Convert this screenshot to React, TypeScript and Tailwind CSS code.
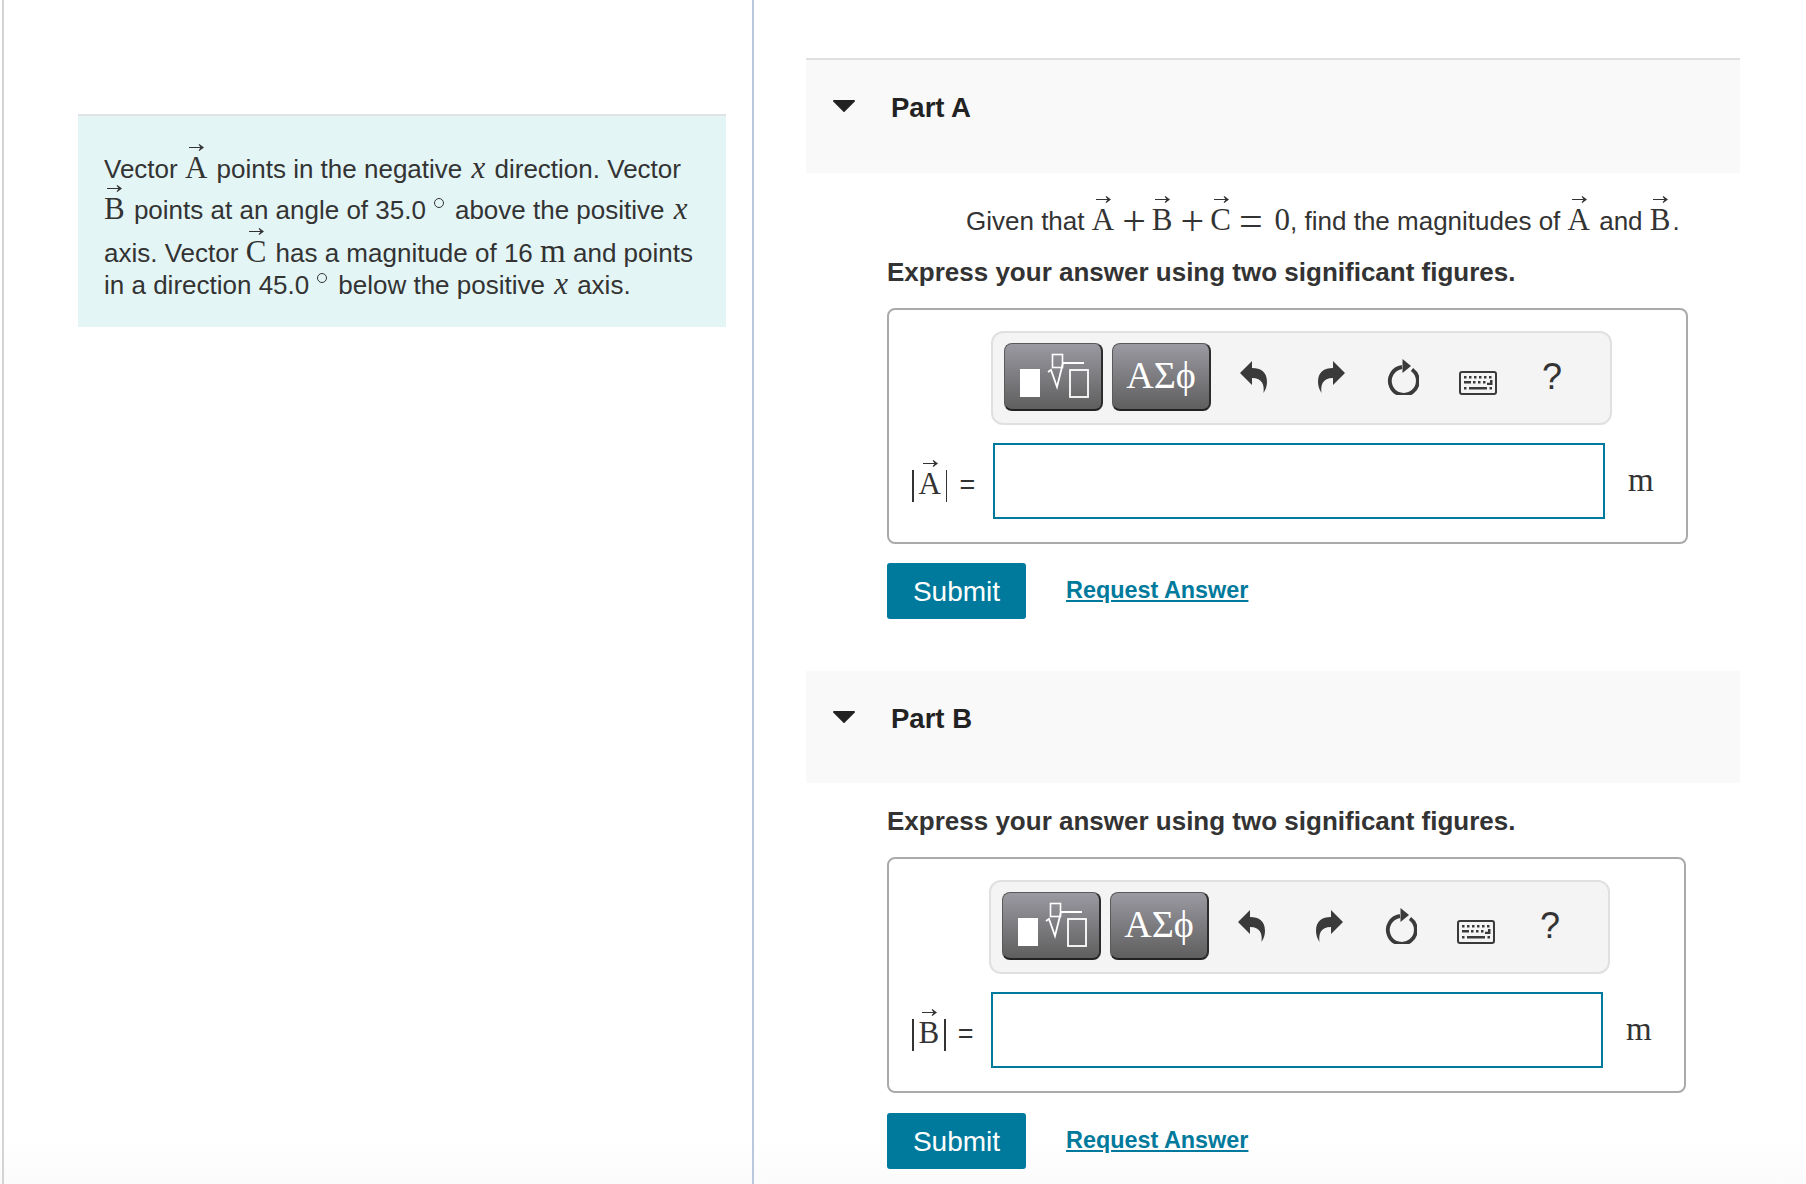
import type { ReactNode } from 'react';

const serif = 'font-["Liberation_Serif",serif]';

function Vec({ c }: { c: string }) {
  return (
    <span className={`relative inline-block mr-[2px] ${serif} text-[31px] leading-[24px]`}>
      {c}
      <svg
        className="absolute left-1/2 -top-[12px] -ml-[7px] w-[15px] h-[7px] text-[#333]"
        viewBox="0 0 15 7"
        fill="currentColor"
      >
        <path d="M0 2.900h11.400L9.600.7l.7-.6L15 3.500l-4.700 3.400-.7-.6 1.800-2.200H0z" />
      </svg>
    </span>
  );
}

function X() {
  return <span className={`${serif} italic text-[31px] leading-[20px] mx-[2px]`}>x</span>;
}

function Deg() {
  return <span className="relative -top-[11px] inline-block w-[10px] h-[10px] rounded-full border border-[#333] ml-[8px] mr-[11px]" />;
}

function Op({ c, end }: { c: string; end?: boolean }) {
  return <span className={`relative top-[5px] ${serif} text-[42px] leading-[20px] ml-[6px] ${end ? 'mr-[12px]' : 'mr-[6px]'}`}>{c}</span>;
}

function PartHeader({ label, border, height }: { label: string; border?: boolean; height: string }) {
  return (
    <div className={`bg-[#f9f9f9] ${height} ${border ? 'border-t-2 border-[#e0e0e0]' : ''} flex items-start pl-[27px]`}>
      <svg className="w-[22px] h-[12px] mt-[40px]" viewBox="0 0 22 12" fill="#222">
        <path d="M1 0h20a1 1 0 0 1 .8 1.600L11.800 11.600a1 1 0 0 1-1.600 0L.2 1.600A1 1 0 0 1 1 0z" />
      </svg>
      <span className="ml-[36px] mt-[32px] text-[27.5px] leading-[32px] font-bold text-[#222]">{label}</span>
    </div>
  );
}

function UndoIcon({ flip }: { flip?: boolean }) {
  return (
    <svg className={`w-[27px] h-[32px] text-[#3a3a3a] ${flip ? '-scale-x-100' : ''}`} viewBox="0 0 27 32" fill="currentColor">
      <path d="M0 12 12 0v7c9 0 15 4 15 14 0 4-1.500 8-3.500 11 1-8-1-15-11.500-15v7z" />
    </svg>
  );
}

function RefreshIcon() {
  return (
    <svg className="w-[32px] h-[36px] text-[#3a3a3a]" viewBox="0 0 32 36" fill="none" stroke="currentColor" strokeWidth="3.800">
      <path d="M25 10.500a14 14 0 1 1-10-2.500" strokeLinecap="butt" />
      <path d="M15.500 0 24 7l-8.500 7z" fill="currentColor" stroke="none" />
    </svg>
  );
}

function KeyboardIcon() {
  const topKeys = [5, 10, 15, 20, 25, 30];
  const midKeys = [14, 19, 24];
  return (
    <svg className="w-[38px] h-[24px] text-[#3a3a3a]" viewBox="0 0 38 24" fill="currentColor">
      <rect x="1" y="1" width="36" height="22" rx="2" fill="none" stroke="currentColor" strokeWidth="2" />
      {topKeys.map((x) => (
        <rect key={x} x={x} y="5" width="2.500" height="2.500" />
      ))}
      <rect x="5" y="10" width="7" height="2.500" />
      {midKeys.map((x) => (
        <rect key={x} x={x} y="10" width="2.500" height="2.500" />
      ))}
      <path d="M31 9h2.500v5H28v-2.300h3z" />
      <rect x="5" y="16" width="2.500" height="2.500" />
      <rect x="10" y="16" width="18" height="2.500" />
      <rect x="30.500" y="16" width="2.500" height="2.500" />
    </svg>
  );
}

function Toolbar() {
  const btn =
    '-mt-[2px] w-[99px] h-[68px] rounded-[8px] bg-gradient-to-b from-[#9b9aa2] to-[#5f5f5f] border border-[#5a5a5a] border-b-2 border-r-2 border-b-[#222] border-r-[#2c2c2c] flex items-center justify-center';
  return (
    <div className="h-[94px] w-[621px] rounded-[12px] border-2 border-[#e0e0e0] bg-[#f4f4f4] flex items-center pl-[11px]">
      <div className={btn}>
        <svg className="w-[80px] h-[62px] -mt-[2px]" viewBox="0 0 80 62" fill="none" stroke="#fff">
          <rect x="7" y="24" width="20" height="28" fill="#fff" stroke="none" />
          <rect x="39.500" y="9.500" width="10" height="13" strokeWidth="1.600" />
          <path d="M35 27l3-2 6 17 6-24h21" strokeWidth="1.800" />
          <rect x="57" y="25" width="18" height="27" strokeWidth="1.800" />
        </svg>
      </div>
      <div className={`${btn} ml-[9px] pb-[3px] text-white ${serif} text-[38px] leading-none`}>ΑΣϕ</div>
      <div className="ml-[29px] -mt-[2px] flex items-center">
        <UndoIcon />
      </div>
      <div className="ml-[51px] -mt-[2px] flex items-center">
        <UndoIcon flip />
      </div>
      <div className="ml-[42px] -mt-[2px]">
        <RefreshIcon />
      </div>
      <div className="ml-[40px] mt-[9px]">
        <KeyboardIcon />
      </div>
      <span className="ml-[45px] -mt-[3px] text-[36px] leading-none text-[#333]">?</span>
    </div>
  );
}

function AnswerBox({ name, narrow }: { name: string; narrow?: boolean }) {
  return (
    <div className={`${narrow ? 'w-[799px]' : 'w-[801px]'} h-[236px] rounded-[8px] border-2 border-[#aaaaaa] pt-[21px]`}>
      <div className={narrow ? 'ml-[100px]' : 'ml-[102px]'}>
        <Toolbar />
      </div>
      <div className="mt-[18px] flex items-start">
        <div className={`${narrow ? 'w-[102px]' : 'w-[104px]'} pl-[23px] pt-[26px] text-[26px] leading-[32px] text-[#333] whitespace-nowrap`}>
          <span className="inline-block w-[1.500px] h-[32px] bg-[#333] align-[-8px]" />
          <span className="ml-[5px] mr-[3px]">
            <Vec c={name} />
          </span>
          <span className="inline-block w-[1.500px] h-[32px] bg-[#333] align-[-8px]" />
          <span className="ml-[12px] text-[27px]">=</span>
        </div>
        <div className="w-[612px] h-[76px] border-2 border-[#007a9c] bg-white" />
        <span className={`ml-[23px] ${serif} text-[33px] leading-[74px] text-[#333]`}>m</span>
      </div>
    </div>
  );
}

function SubmitRow() {
  return (
    <div className="flex items-center">
      <button className="w-[139px] h-[56px] pt-[1px] rounded-[3px] bg-[#007a9c] text-white text-[28px]">Submit</button>
      <a className="ml-[40px] text-[23.4px] font-bold text-[#007a9c] underline">Request Answer</a>
    </div>
  );
}

function Line({ mt, children }: { mt?: string; children: ReactNode }) {
  return <div className={`${mt ?? ''} h-[32px] leading-[32px] whitespace-pre`}>{children}</div>;
}

export default function App() {
  return (
    <div className='h-[1184px] flex bg-gradient-to-b from-white from-[96%] to-[#fbfbfb] text-[#333] font-["Liberation_Sans",sans-serif] overflow-hidden'>
      {/* statement column */}
      <div className="w-[752px] ml-[2px] border-l-2 border-r-2 border-l-[#d4d4d4] border-r-[#b9c8dc] pl-[74px] pt-[114px]">
        <div className="w-[648px] h-[213px] bg-[#e4f5f5] border-t-2 border-[#dfe3e3] pl-[26px] pt-[37px] text-[26px]">
          <Line>
            Vector <Vec c="A" /> points in the negative <X /> direction. Vector
          </Line>
          <Line mt="mt-[9px]">
            <Vec c="B" /> points at an angle of 35.0<Deg />above the positive <X />
          </Line>
          <Line mt="mt-[11px]">
            axis. Vector <Vec c="C" /> has a magnitude of 16 <span className={`${serif} text-[33px] leading-[20px]`}>m</span> and points
          </Line>
          <Line>
            in a direction 45.0<Deg />below the positive <X /> axis.
          </Line>
        </div>
      </div>

      {/* parts column */}
      <div className="flex-1 pl-[52px] pt-[58px]">
        <div className="w-[934px]">
          <PartHeader label="Part A" border height="h-[115px]" />
          <div className="ml-[160px] mt-[31px] text-[26px] h-[34px] leading-[34px] whitespace-pre">
            Given that <Vec c="A" /><Op c="+" /><Vec c="B" /><Op c="+" /><Vec c="C" /><Op c="=" end />
            <span className={`${serif} text-[31px] leading-[20px]`}>0</span>, find the magnitudes of <Vec c="A" /> and <Vec c="B" />.
          </div>
          <p className="ml-[81px] mt-[18px] text-[26px] leading-[32px] font-bold">Express your answer using two significant figures.</p>
          <div className="ml-[81px] mt-[20px]">
            <AnswerBox name="A" />
          </div>
          <div className="ml-[81px] mt-[19px]">
            <SubmitRow />
          </div>
          <div className="mt-[52px]">
            <PartHeader label="Part B" height="h-[112px]" />
          </div>
          <p className="ml-[81px] mt-[22px] text-[26px] leading-[32px] font-bold">Express your answer using two significant figures.</p>
          <div className="ml-[81px] mt-[20px]">
            <AnswerBox name="B" narrow />
          </div>
          <div className="ml-[81px] mt-[20px]">
            <SubmitRow />
          </div>
        </div>
      </div>
    </div>
  );
}
